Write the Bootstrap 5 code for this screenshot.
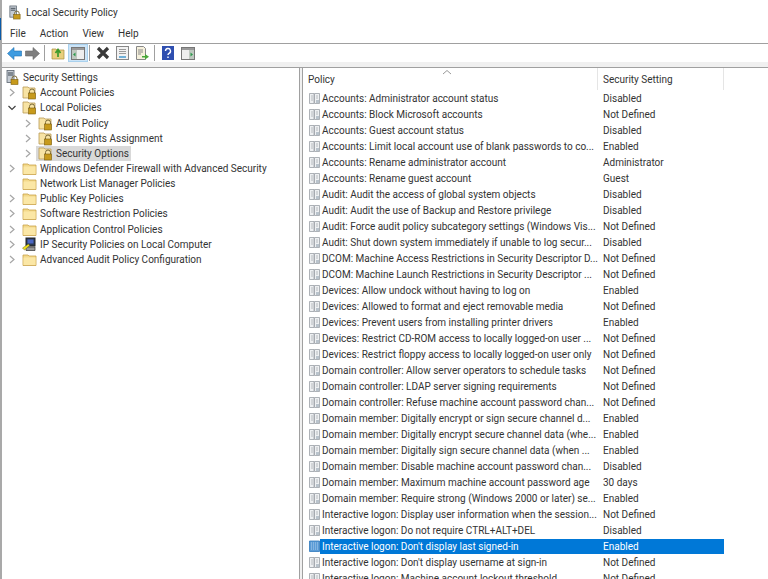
<!DOCTYPE html>
<html lang="en">
<head>
  <meta charset="UTF-8">
  <title>Local Security Policy</title>
  <link href="https://cdn.jsdelivr.net/npm/bootstrap@5.3.0/dist/css/bootstrap.min.css" rel="stylesheet">
  <style>
    html, body { height: 100%; overflow: hidden; }
    body {
      background: #fff;
      color: #333;
      font-family: "Roboto", "Open Sans", sans-serif;
      font-size: 10px;
      line-height: 15px;
    }
    .app-window { height: 579px; border-left: 2px solid #a9a9a9; }
    .edge-sliver { position: absolute; left: 0; top: 18px; width: 1px; height: 22px; background: #0a5aa8; }
    .title-bar { height: 22px; padding-left: 6px; padding-top: 2px; }
    .menu-bar { height: 22px; padding-left: 8px; padding-top: 2px; gap: 14px; border-bottom: 1px solid #a0a0a0; }
    .tool-bar { height: 18px; padding-left: 3px; }
    .tool-btn { width: 18px; height: 18px; }
    .tool-btn.is-on { width: 20px; background: #cce4f7; outline: 1px solid #a9d1ee; outline-offset: -1px; }
    .tool-sep { width: 1px; height: 16px; background: #a0a0a0; margin: 0 4px 0 3px; }
    .step-1 { margin-left: 1px; }
    .step-2 { margin-left: 2px; }
    .pane-strip { height: 6px; background: #f0f0f0; border-bottom: 1px solid #a0a0a0; }
    .pane-wrap { height: 511px; }
    .tree-pane { width: 298px; flex: none; border-right: 1px solid #a0a0a0; padding-top: 2px; }
    .gap-pane { width: 2px; flex: none; background: #f0f0f0; }
    .list-pane { flex: 1; border-left: 1px solid #a0a0a0; overflow: hidden; }
    .tree-row { height: 15.17px; white-space: nowrap; }
    .tree-arrow { width: 12px; flex: none; text-align: center; }
    .tree-text { padding: 0 2px; margin-left: 1px; }
    .lvl-0 { padding-left: 3px; }
    .lvl-0 .tree-icon { margin-left: 0; }
    .lvl-1 { padding-left: 4px; }
    .lvl-2 { padding-left: 20px; }
    .tree-icon { width: 15px; height: 15px; flex: none; margin-left: 4px; }
    .tree-node-sel { background: #d9d9d9; margin-left: 2px; padding-left: 2px; height: 15px; }
    .tree-node-sel .tree-icon { margin-left: 0; }
    .head-row { height: 22px; }
    .head-cell { border-right: 1px solid #e5e5e5; padding-left: 5px; padding-top: 4px; height: 22px; }
    .sort-mark { position: absolute; left: 139px; top: 1px; }
    .col-policy { width: 295px; flex: none; }
    .col-setting { width: 126px; flex: none; }
    .policy-row { height: 16px; white-space: nowrap; }
    .policy-icon { width: 11px; height: 12px; flex: none; margin-left: 6px; }
    .policy-name { width: 278px; flex: none; padding-left: 2px; overflow: hidden; }
    .policy-value { width: 126px; flex: none; padding-left: 5px; }
    .policy-row.is-sel .policy-name, .policy-row.is-sel .policy-value { background: #0078d7; color: #fff; }
  </style>
</head>
<body>
  <svg width="0" height="0" class="position-absolute">
    <symbol id="folder" viewBox="0 0 15 15">
      <path d="M1 3h5l1 1h7v9.500H1z" fill="#f3d98b" stroke="#c9a24a" stroke-width=".8"/>
      <path d="M1.500 5.500h12v7.500h-12z" fill="#fbe7a6"/>
    </symbol>
    <symbol id="lockfolder" viewBox="0 0 15 15">
      <path d="M1 2h5l1 1h6v10H1z" fill="#f7e3a4" stroke="#b99a55" stroke-width=".8"/>
      <path d="M7.500 8V6.500a2.500 2.500 0 0 1 5 0V8" fill="none" stroke="#7a6a3a" stroke-width="1"/>
      <rect x="6.500" y="8" width="7" height="6" fill="#c79a1c" stroke="#7d5f10" stroke-width=".6"/>
    </symbol>
    <symbol id="server" viewBox="0 0 15 15">
      <rect x="2" y="0.500" width="7" height="12" fill="#c5ccd4" stroke="#59636e" stroke-width=".8"/>
      <path d="M3 3h5M3 5h5" stroke="#3d4650"/>
      <path d="M7 10V8.500a2.500 2.500 0 0 1 5 0V10" fill="none" stroke="#7a6a3a"/>
      <rect x="6" y="9.500" width="7" height="5" fill="#c79a1c" stroke="#7d5f10" stroke-width=".6"/>
    </symbol>
    <symbol id="ipsec" viewBox="0 0 15 15">
      <rect x="4" y="1" width="9" height="8" fill="#2b3a55" stroke="#222"/>
      <rect x="5.500" y="2.500" width="6" height="4" fill="#4a66c4"/>
      <path d="M4 10h9v3.500H4z" fill="#9a9a9a" stroke="#333" stroke-width=".7"/>
      <path d="M0.500 11l6-4 1 1.500-5 4.500z" fill="#f2e21c" stroke="#6a6a10" stroke-width=".5"/>
    </symbol>
    <symbol id="policy" viewBox="0 0 11 12">
      <path d="M.5 1.500h4.500v10H.5zM5.500 1.500H10.500v10H5.500z" fill="#eef0f2" stroke="#9aa0a6" stroke-width=".8"/>
      <path d="M2 4h2M2 6h2M2 8h2M7 4h2M7 6h2" stroke="#a8adb2" stroke-width=".8"/>
      <path d="M7 8h3v3H7z" fill="#b9c3cc"/>
    </symbol>
    <symbol id="policy-sel" viewBox="0 0 11 12">
      <path d="M.5 1h10v10.500H.5z" fill="#5a9bd6" stroke="#2f78bd" stroke-width=".8"/>
      <path d="M2 3h7M2 5h7M2 7h7M2 9h7" stroke="#c3dcf2" stroke-width=".8" stroke-dasharray="1 1"/>
    </symbol>
    <symbol id="arrow-r" viewBox="0 0 12 15"><path d="M4 4l4 3.500-4 3.500" fill="none" stroke="#a6a6a6" stroke-width="1.200"/></symbol>
    <symbol id="arrow-d" viewBox="0 0 12 15"><path d="M2.500 6l3.500 3.500L9.500 6" fill="none" stroke="#404040" stroke-width="1.200"/></symbol>
  </svg>

  <div class="edge-sliver"></div>
  <div class="app-window d-flex flex-column">
    <div class="title-bar d-flex align-items-center gap-1">
      <svg width="14" height="15"><use href="#server"/></svg>
      <span>Local Security Policy</span>
    </div>
    <div class="menu-bar d-flex align-items-center">
      <span>File</span><span>Action</span><span>View</span><span>Help</span>
    </div>
    <div class="tool-bar d-flex align-items-center">
      <span class="tool-btn d-flex align-items-center justify-content-center">
        <svg width="15" height="13" viewBox="0 0 15 13"><path d="M7 0.500L.5 6.500 7 12.500V9h7.500V4H7z" fill="#3d9be0" stroke="#1f6fb0" stroke-width=".6"/></svg>
      </span>
      <span class="tool-btn d-flex align-items-center justify-content-center">
        <svg width="15" height="13" viewBox="0 0 15 13"><path d="M8 0.500l6.500 6L8 12.500V9H.5V4H8z" fill="#7f7f7f" stroke="#666" stroke-width=".6"/></svg>
      </span>
      <span class="tool-sep"></span>
      <span class="tool-btn d-flex align-items-center justify-content-center">
        <svg width="14" height="14" viewBox="0 0 14 14"><path d="M1 3h4l1 1h7v9H1z" fill="#e9cf7e" stroke="#a98c3e" stroke-width=".7"/><path d="M7 11V5M4.500 7L7 3.500 9.500 7" fill="none" stroke="#3c9a2c" stroke-width="1.700"/></svg>
      </span>
      <span class="tool-btn is-on step-1 d-flex align-items-center justify-content-center">
        <svg width="14" height="13" viewBox="0 0 14 13"><rect x=".5" y=".5" width="13" height="12" fill="#eee" stroke="#777"/><path d="M1 1h12v2H1z" fill="#999"/><path d="M1 3h5v9H1z" fill="#bfc8c0"/><path d="M4.500 5.500v4l-2.500-2z" fill="#2c9a4c"/></svg>
      </span>
      <span class="tool-sep step-1"></span>
      <span class="tool-btn d-flex align-items-center justify-content-center">
        <svg width="14" height="14" viewBox="0 0 14 14"><path d="M2 2l10 10M12 2L2 12" stroke="#3a3a3a" stroke-width="3.200"/></svg>
      </span>
      <span class="tool-btn step-1 d-flex align-items-center justify-content-center">
        <svg width="13" height="14" viewBox="0 0 13 14"><rect x=".5" y=".5" width="12" height="13" fill="#f2f2f2" stroke="#888"/><path d="M3 3.500h7M3 5.500h7M3 7.500h7" stroke="#9a9a9a"/><path d="M3 11h7" stroke="#6fb0d8" stroke-width="2"/></svg>
      </span>
      <span class="tool-btn step-2 d-flex align-items-center justify-content-center">
        <svg width="14" height="14" viewBox="0 0 14 14"><path d="M1.500.5h7l2 2v11h-9z" fill="#f5f0dc" stroke="#888"/><path d="M3 4h5M3 6h5M3 8h3" stroke="#8a8a8a"/><path d="M7 10h3V8l4 2.700-4 2.700v-2H7z" fill="#49a83a"/></svg>
      </span>
      <span class="tool-sep"></span>
      <span class="tool-btn d-flex align-items-center justify-content-center">
        <svg width="12" height="14" viewBox="0 0 12 14"><rect width="12" height="14" fill="#2f4fb0"/><path d="M3.500 5a2.500 2.500 0 1 1 3.500 2.300c-.7.400-1 .8-1 1.700M6 10.500v1.500" fill="none" stroke="#fff" stroke-width="1.400"/></svg>
      </span>
      <span class="tool-btn step-2 d-flex align-items-center justify-content-center">
        <svg width="14" height="13" viewBox="0 0 14 13"><rect x=".5" y=".5" width="13" height="12" fill="#eee" stroke="#777"/><path d="M1 1h12v2H1z" fill="#999"/><path d="M8 3h5v9H8z" fill="#bfc8c0"/><path d="M9.500 5.500v4l2.500-2z" fill="#2c9a4c"/></svg>
      </span>
    </div>
    <div class="pane-strip"></div>

    <div class="pane-wrap d-flex">
      <div class="tree-pane">
        <div class="tree-row lvl-0 d-flex align-items-center"><svg class="tree-icon"><use href="#server"/></svg><span class="tree-text">Security Settings</span></div>
        <div class="tree-row lvl-1 d-flex align-items-center"><svg class="tree-arrow" height="15"><use href="#arrow-r"/></svg><svg class="tree-icon"><use href="#lockfolder"/></svg><span class="tree-text">Account Policies</span></div>
        <div class="tree-row lvl-1 d-flex align-items-center"><svg class="tree-arrow" height="15"><use href="#arrow-d"/></svg><svg class="tree-icon"><use href="#lockfolder"/></svg><span class="tree-text">Local Policies</span></div>
        <div class="tree-row lvl-2 d-flex align-items-center"><svg class="tree-arrow" height="15"><use href="#arrow-r"/></svg><svg class="tree-icon"><use href="#lockfolder"/></svg><span class="tree-text">Audit Policy</span></div>
        <div class="tree-row lvl-2 d-flex align-items-center"><svg class="tree-arrow" height="15"><use href="#arrow-r"/></svg><svg class="tree-icon"><use href="#lockfolder"/></svg><span class="tree-text">User Rights Assignment</span></div>
        <div class="tree-row lvl-2 d-flex align-items-center"><svg class="tree-arrow" height="15"><use href="#arrow-r"/></svg><span class="tree-node-sel d-flex align-items-center"><svg class="tree-icon"><use href="#lockfolder"/></svg><span class="tree-text">Security Options</span></span></div>
        <div class="tree-row lvl-1 d-flex align-items-center"><svg class="tree-arrow" height="15"><use href="#arrow-r"/></svg><svg class="tree-icon"><use href="#folder"/></svg><span class="tree-text">Windows Defender Firewall with Advanced Security</span></div>
        <div class="tree-row lvl-1 d-flex align-items-center"><span class="tree-arrow"></span><svg class="tree-icon"><use href="#folder"/></svg><span class="tree-text">Network List Manager Policies</span></div>
        <div class="tree-row lvl-1 d-flex align-items-center"><svg class="tree-arrow" height="15"><use href="#arrow-r"/></svg><svg class="tree-icon"><use href="#folder"/></svg><span class="tree-text">Public Key Policies</span></div>
        <div class="tree-row lvl-1 d-flex align-items-center"><svg class="tree-arrow" height="15"><use href="#arrow-r"/></svg><svg class="tree-icon"><use href="#folder"/></svg><span class="tree-text">Software Restriction Policies</span></div>
        <div class="tree-row lvl-1 d-flex align-items-center"><svg class="tree-arrow" height="15"><use href="#arrow-r"/></svg><svg class="tree-icon"><use href="#folder"/></svg><span class="tree-text">Application Control Policies</span></div>
        <div class="tree-row lvl-1 d-flex align-items-center"><svg class="tree-arrow" height="15"><use href="#arrow-r"/></svg><svg class="tree-icon"><use href="#ipsec"/></svg><span class="tree-text">IP Security Policies on Local Computer</span></div>
        <div class="tree-row lvl-1 d-flex align-items-center"><svg class="tree-arrow" height="15"><use href="#arrow-r"/></svg><svg class="tree-icon"><use href="#folder"/></svg><span class="tree-text">Advanced Audit Policy Configuration</span></div>
      </div>
      <div class="gap-pane"></div>
      <div class="list-pane position-relative">
        <svg class="sort-mark" width="10" height="6" viewBox="0 0 10 6"><path d="M1 5l4-3.500L9 5" fill="none" stroke="#999"/></svg>
        <div class="head-row d-flex">
          <div class="head-cell col-policy">Policy</div>
          <div class="head-cell col-setting">Security Setting</div>
        </div>
        <div id="policy-rows"></div>
      </div>
    </div>
  </div>

  <script>
    const rows = [
      ['Accounts: Administrator account status', 'Disabled'],
      ['Accounts: Block Microsoft accounts', 'Not Defined'],
      ['Accounts: Guest account status', 'Disabled'],
      ['Accounts: Limit local account use of blank passwords to co...', 'Enabled'],
      ['Accounts: Rename administrator account', 'Administrator'],
      ['Accounts: Rename guest account', 'Guest'],
      ['Audit: Audit the access of global system objects', 'Disabled'],
      ['Audit: Audit the use of Backup and Restore privilege', 'Disabled'],
      ['Audit: Force audit policy subcategory settings (Windows Vis...', 'Not Defined'],
      ['Audit: Shut down system immediately if unable to log secur...', 'Disabled'],
      ['DCOM: Machine Access Restrictions in Security Descriptor D...', 'Not Defined'],
      ['DCOM: Machine Launch Restrictions in Security Descriptor ...', 'Not Defined'],
      ['Devices: Allow undock without having to log on', 'Enabled'],
      ['Devices: Allowed to format and eject removable media', 'Not Defined'],
      ['Devices: Prevent users from installing printer drivers', 'Enabled'],
      ['Devices: Restrict CD-ROM access to locally logged-on user ...', 'Not Defined'],
      ['Devices: Restrict floppy access to locally logged-on user only', 'Not Defined'],
      ['Domain controller: Allow server operators to schedule tasks', 'Not Defined'],
      ['Domain controller: LDAP server signing requirements', 'Not Defined'],
      ['Domain controller: Refuse machine account password chan...', 'Not Defined'],
      ['Domain member: Digitally encrypt or sign secure channel d...', 'Enabled'],
      ['Domain member: Digitally encrypt secure channel data (whe...', 'Enabled'],
      ['Domain member: Digitally sign secure channel data (when ...', 'Enabled'],
      ['Domain member: Disable machine account password chan...', 'Disabled'],
      ['Domain member: Maximum machine account password age', '30 days'],
      ['Domain member: Require strong (Windows 2000 or later) se...', 'Enabled'],
      ['Interactive logon: Display user information when the session...', 'Not Defined'],
      ['Interactive logon: Do not require CTRL+ALT+DEL', 'Disabled'],
      ["Interactive logon: Don't display last signed-in", 'Enabled'],
      ["Interactive logon: Don't display username at sign-in", 'Not Defined'],
      ['Interactive logon: Machine account lockout threshold', 'Not Defined']
    ];
    const box = document.getElementById('policy-rows');
    rows.forEach((r, i) => {
      const sel = i === 28;
      const row = document.createElement('div');
      row.className = 'policy-row d-flex align-items-center' + (sel ? ' is-sel' : '');
      row.innerHTML = `<svg class="policy-icon"><use href="#${sel ? 'policy-sel' : 'policy'}"/></svg>`;
      const name = document.createElement('span');
      name.className = 'policy-name';
      name.textContent = r[0];
      const value = document.createElement('span');
      value.className = 'policy-value';
      value.textContent = r[1];
      row.append(name, value);
      box.append(row);
    });
  </script>
</body>
</html>
